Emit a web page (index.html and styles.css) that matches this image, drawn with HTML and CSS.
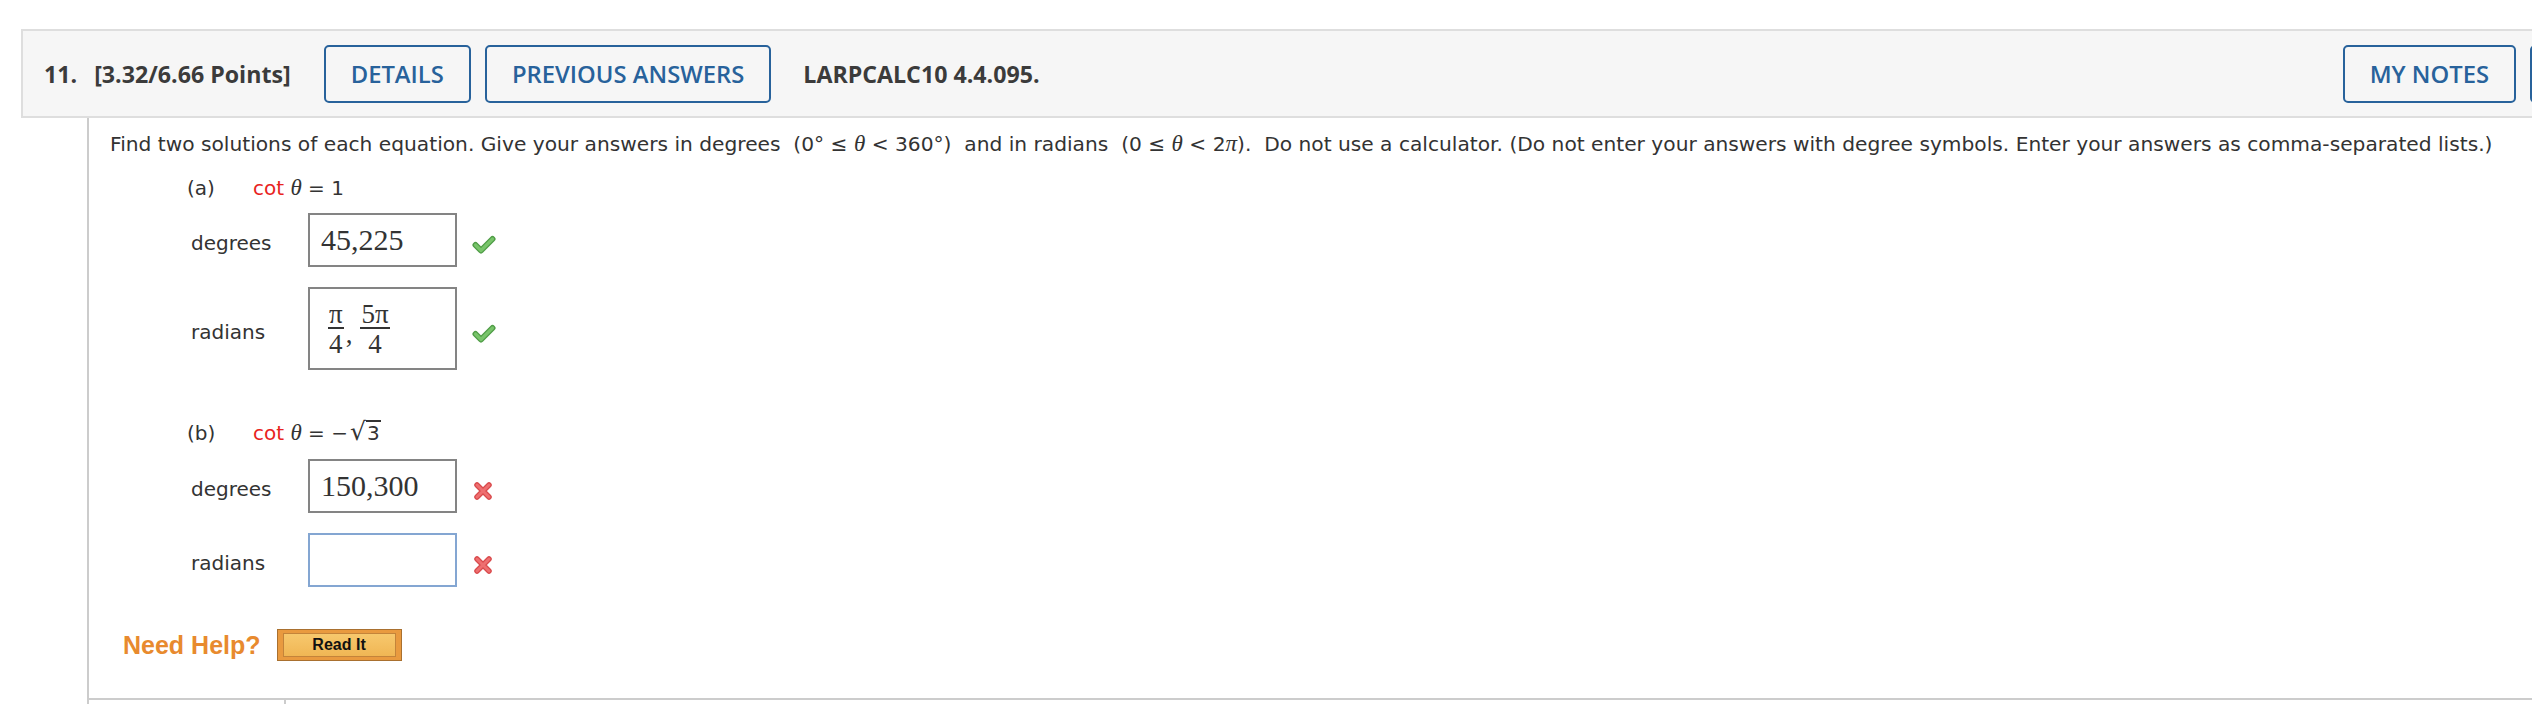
FILE: index.html
```html
<!DOCTYPE html>
<html>
<head>
<meta charset="utf-8">
<link rel="stylesheet" href="styles.css">
</head>
<body>
<div class="page">
  <div class="qheader">
    <div class="qtitle"><span class="qnum">11.</span>[3.32/6.66 Points]</div>
    <div class="btn">DETAILS</div>
    <div class="btn">PREVIOUS ANSWERS</div>
    <div class="source">LARPCALC10 4.4.095.</div>
    <div class="spacer"></div>
    <div class="btn">MY NOTES</div>
    <div class="btn cut"></div>
  </div>
  <div class="qwrap">
    <div class="qbody">
      <p class="prompt">Find two solutions of each equation. Give your answers in degrees&nbsp; (0° ≤ <i class="mi">θ</i> &lt; 360°)&nbsp; and in radians&nbsp; (0 ≤ <i class="mi">θ</i> &lt; 2<i class="mi">π</i>).&nbsp; Do not use a calculator. (Do not enter your answers with degree symbols. Enter your answers as comma-separated lists.)</p>

      <div class="part part-a"><span class="part-label">(a)</span><span class="cot">cot</span>&nbsp;<i class="mi">θ</i>&nbsp;=&nbsp;1</div>
      <div class="row row-first">
        <span class="lbl">degrees</span>
        <div class="ans">45,225</div>
        <svg class="icon" width="24" height="20" viewBox="0 0 24 20"><path d="M3.5 10 L9 15.5 L20.5 4" fill="none" stroke="#4f9c46" stroke-width="6" stroke-linecap="round" stroke-linejoin="round"/><path d="M3.5 10 L9 15.5 L20.5 4" fill="none" stroke="#78c46a" stroke-width="3.2" stroke-linecap="round" stroke-linejoin="round"/></svg>
      </div>
      <div class="row row-next">
        <span class="lbl">radians</span>
        <div class="ans tall">
          <span class="frac"><span class="num">π</span><span class="den">4</span></span><span class="comma">,</span><span class="frac"><span class="num">5π</span><span class="den">4</span></span>
        </div>
        <svg class="icon" width="24" height="20" viewBox="0 0 24 20"><path d="M3.5 10 L9 15.5 L20.5 4" fill="none" stroke="#4f9c46" stroke-width="6" stroke-linecap="round" stroke-linejoin="round"/><path d="M3.5 10 L9 15.5 L20.5 4" fill="none" stroke="#78c46a" stroke-width="3.2" stroke-linecap="round" stroke-linejoin="round"/></svg>
      </div>

      <div class="part part-b"><span class="part-label">(b)</span><span class="cot">cot</span>&nbsp;<i class="mi">θ</i>&nbsp;=&nbsp;−<span class="rad">√</span><span class="radicand">3</span></div>
      <div class="row row-first-b">
        <span class="lbl">degrees</span>
        <div class="ans">150,300</div>
        <svg class="icon" width="22" height="22" viewBox="0 0 22 22"><path d="M5 5 L17 17 M17 5 L5 17" fill="none" stroke="#d94a4c" stroke-width="5.5" stroke-linecap="round"/><path d="M5 5 L17 17 M17 5 L5 17" fill="none" stroke="#ee6f70" stroke-width="3" stroke-linecap="round"/></svg>
      </div>
      <div class="row row-next">
        <span class="lbl">radians</span>
        <div class="ans empty"></div>
        <svg class="icon" width="22" height="22" viewBox="0 0 22 22"><path d="M5 5 L17 17 M17 5 L5 17" fill="none" stroke="#d94a4c" stroke-width="5.5" stroke-linecap="round"/><path d="M5 5 L17 17 M17 5 L5 17" fill="none" stroke="#ee6f70" stroke-width="3" stroke-linecap="round"/></svg>
      </div>

      <div class="help">
        <span class="help-text">Need Help?</span>
        <div class="readit"><div class="readit-inner">Read It</div></div>
      </div>
    </div>
    <div class="qfoot">
      <div class="fcell"></div>
      <div class="fcell2"></div>
    </div>
  </div>
</div>
</body>
</html>
```

FILE: styles.css
```css
html, body {
  margin: 0;
  padding: 0;
  background: #ffffff;
  overflow: hidden;
}
body {
  width: 2532px;
  height: 704px;
  font-family: "DejaVu Sans", Verdana, sans-serif;
  color: #333333;
}
.page {
  padding-top: 29px;
}
.qheader {
  display: flex;
  align-items: center;
  margin-left: 21px;
  height: 85px;
  border: 2px solid #dedede;
  border-right: none;
  background: #f6f6f6;
  padding-left: 21px;
  font-family: "Open Sans", sans-serif;
  font-size: 23.2px;
}
.qtitle {
  font-weight: 700;
  color: #3b3b3b;
  margin-right: 33px;
  white-space: nowrap;
}
.qnum {
  margin-right: 17px;
}
.btn {
  flex-shrink: 0;
  height: 58px;
  box-sizing: border-box;
  border: 2px solid #28629b;
  border-radius: 5px;
  padding: 0 25px;
  color: #28629b;
  font-weight: 600;
  font-size: 23.8px;
  display: flex;
  align-items: center;
  white-space: nowrap;
}
.btn + .btn {
  margin-left: 14px;
}
.source {
  margin-left: 32px;
  font-weight: 700;
  color: #3b3b3b;
  white-space: nowrap;
}
.spacer {
  flex: 1;
}
.btn.cut {
  width: 240px;
  margin-right: -238px;
}
.qwrap {
  margin-left: 87px;
  border-left: 2px solid #cccccc;
  height: 586px;
}
.qbody {
  box-sizing: border-box;
  height: 580px;
  padding: 13px 0 0 21px;
}
.prompt {
  margin: 0;
  font-size: 20.2px;
  line-height: 26px;
  white-space: nowrap;
}
.mi {
  font-family: "Liberation Serif", "DejaVu Serif", serif;
  font-style: italic;
  font-size: 23px;
}
.part {
  display: flex;
  align-items: baseline;
  font-size: 20px;
  line-height: 26px;
  margin-left: 77px;
}
.part-a {
  margin-top: 18px;
}
.part-b {
  margin-top: 49px;
}
.part-label {
  width: 66px;
}
.cot {
  color: #e8231e;
}
.rad {
  font-size: 25px;
  margin-left: 2px;
}
.radicand {
  border-top: 2px solid #333333;
  line-height: 22px;
  padding: 0 1px;
}
.row {
  display: flex;
  align-items: center;
  margin-left: 81px;
}
.row-first {
  margin-top: 12px;
}
.row-first-b {
  margin-top: 13px;
}
.row-next {
  margin-top: 20px;
}
.lbl {
  width: 117px;
  font-size: 20px;
  padding-top: 6px;
}
.ans {
  width: 149px;
  height: 54px;
  box-sizing: border-box;
  border: 2px solid #848484;
  display: flex;
  align-items: center;
  padding-left: 11px;
  font-family: "Liberation Serif", "DejaVu Serif", serif;
  font-size: 30px;
  color: #333333;
}
.ans.tall {
  height: 83px;
  padding-left: 18px;
}
.ans.empty {
  border-color: #84a6d2;
}
.frac {
  display: inline-flex;
  flex-direction: column;
  align-items: center;
  font-size: 27px;
  line-height: 24px;
}
.num {
  border-bottom: 2px solid #333333;
  padding: 0 1px 1px;
}
.den {
  padding-top: 3px;
}
.comma {
  font-size: 27px;
  margin: 12px 8px 0 2px;
}
.icon {
  margin-left: 15px;
  margin-top: 10px;
}
.help {
  display: flex;
  align-items: center;
  margin-top: 42px;
  margin-left: 13px;
}
.help-text {
  font-family: "Liberation Sans", Arial, sans-serif;
  font-weight: 700;
  font-size: 25px;
  color: #e88a2e;
}
.readit {
  margin-left: 16px;
  width: 125px;
  height: 32px;
  box-sizing: border-box;
  border: 1px solid #a9702f;
  background: #e99a3f;
  padding: 3px 5px;
}
.readit-inner {
  height: 100%;
  box-sizing: border-box;
  border: 1px solid #c4843a;
  background: linear-gradient(#f7c86d, #f0b654);
  display: flex;
  align-items: center;
  justify-content: center;
  font-family: "Liberation Sans", Arial, sans-serif;
  font-weight: 700;
  font-size: 16px;
  color: #111111;
}
.qfoot {
  display: flex;
  border-top: 2px solid #cccccc;
  height: 6px;
}
.fcell {
  width: 195px;
  border-right: 2px solid #cccccc;
}
.fcell2 {
  flex: 1;
}
```
